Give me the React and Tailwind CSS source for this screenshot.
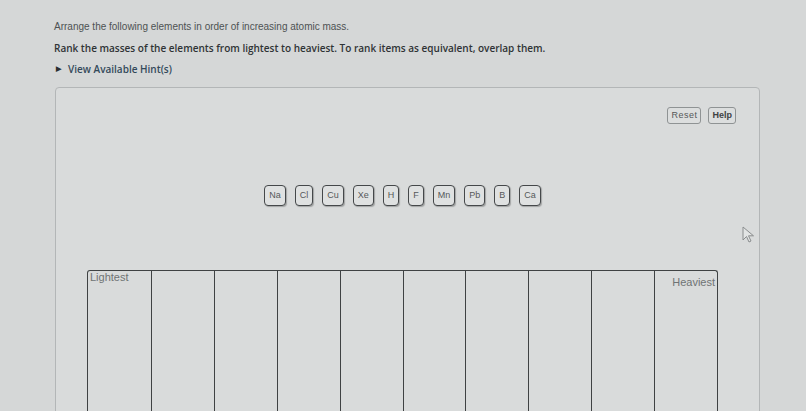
import React from "react";

const elements = ["Na", "Cl", "Cu", "Xe", "H", "F", "Mn", "Pb", "B", "Ca"];
const slots = Array.from({ length: 10 }, (_, i) => i);

const Tile = ({ symbol }) => (
  <div className="flex h-[21px] min-w-[14px] items-center justify-center rounded-[4px] border-[1.5px] border-[#45484a] bg-[#dfe1e1] px-[4px] text-[9px] leading-none text-[#555859] shadow-[1px_1px_1px_rgba(0,0,0,0.25)]">
    {symbol}
  </div>
);

const Cursor = () => (
  <svg
    className="absolute left-[742px] top-[226px]"
    width="14"
    height="18"
    viewBox="0 0 14 18"
  >
    <path
      d="M1 1 L1 14 L4.5 10.5 L7 16 L9 15 L6.5 9.8 L11.5 9.8 Z"
      fill="#e2e4e4"
      stroke="#8a8d8e"
      strokeWidth="1"
      strokeLinejoin="round"
    />
  </svg>
);

export default function App() {
  return (
    <div className="relative h-[411px] w-[806px] overflow-hidden bg-[#d5d7d7] font-['Liberation_Sans',Arial,sans-serif]">
      <div className="pl-[54px] pt-[21px]">
        {/* Question text */}
        <p className="text-[10px] leading-[12px] text-[#4e5253]">
          Arrange the following elements in order of increasing atomic mass.
        </p>
        <p className="mt-[9px] font-['Open_Sans',sans-serif] text-[10px] font-semibold leading-[12px] text-[#2f3335]">
          Rank the masses of the elements from lightest to heaviest. To rank
          items as equivalent, overlap them.
        </p>
        <div className="mt-[9px] flex items-center gap-[7px] pl-[2px] font-['Open_Sans',sans-serif] text-[10px] font-semibold leading-[12px] text-[#33495a]">
          <span className="text-[7px] text-[#2b2f31]">▶</span>
          <span>View Available Hint(s)</span>
        </div>
      </div>

      {/* Ranking panel */}
      <div className="ml-[55px] mt-[12px] h-[340px] w-[705px] rounded-t-[4px] border border-[#b3b6b7] bg-[#d9dbdb]">
        <div className="flex justify-end gap-[7px] pr-[23px] pt-[19px]">
          <button className="h-[17px] rounded-[3px] border border-[#8f9394] bg-[#dcdede] px-[3px] text-[9px] leading-none tracking-[0.5px] text-[#555859]">
            Reset
          </button>
          <button className="h-[17px] rounded-[3px] border border-[#8f9394] bg-[#dcdede] px-[3px] text-[9px] font-bold leading-none text-[#3e4244]">
            Help
          </button>
        </div>

        <div className="mt-[61px] flex justify-center gap-[9px] pr-[10px]">
          {elements.map((el) => (
            <Tile key={el} symbol={el} />
          ))}
        </div>

        <div className="ml-[31px] mt-[64px] grid h-[160px] w-[631px] grid-cols-10 rounded-t-[3px] border-[1.5px] border-b-0 border-[#3f4243]">
          {slots.map((i) => (
            <div
              key={i}
              className={
                i === 0
                  ? "px-[2px] text-[11px] leading-[12px] text-[#6f7374]"
                  : i === 9
                  ? "border-l-[1.5px] border-[#3f4243] px-[2px] pt-[5px] text-right text-[11px] leading-[12px] text-[#6f7374]"
                  : "border-l-[1.5px] border-[#3f4243]"
              }
            >
              {i === 0 && "Lightest"}
              {i === 9 && "Heaviest"}
            </div>
          ))}
        </div>
      </div>

      <Cursor />
    </div>
  );
}
